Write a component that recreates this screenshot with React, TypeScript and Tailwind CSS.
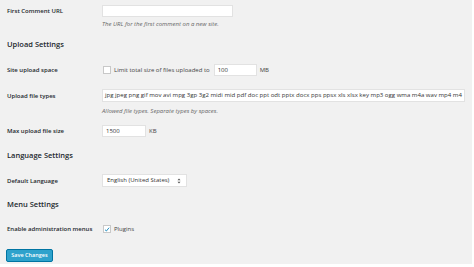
import React from "react";

const font = { fontFamily: '"Open Sans", "Noto Sans", Arial, sans-serif' };

function Label({ children }: { children: React.ReactNode }) {
  return (
    <div className="w-[95px] shrink-0 text-[6px] font-semibold text-[#23282d] leading-[8px]">
      {children}
    </div>
  );
}

function Heading({ children, mt }: { children: React.ReactNode; mt: string }) {
  return (
    <div className={`${mt} h-[12px] flex items-center text-[7.5px] font-semibold text-[#23282d]`}>{children}</div>
  );
}

export default function App() {
  return (
    <div className="w-[474px] h-[267px] bg-white overflow-hidden" style={font}>
      <div className="w-[472px] h-[264px] bg-[#f1f1f1] px-[7px] flex flex-col">
        <div className="mt-[5px] h-[12px] flex items-center">
          <Label>First Comment URL</Label>
          <div className="w-[131px] h-[12px] bg-white border border-[#e2e2e2]" />
        </div>
        <div className="mt-[3px] h-[8px] pl-[95px] flex items-center text-[6px] italic text-[#666]">
          The URL for the first comment on a new site.
        </div>

        <Heading mt="mt-[11px]">Upload Settings</Heading>

        <div className="mt-[13px] h-[12px] flex items-center">
          <Label>Site upload space</Label>
          <div className="ml-[1px] w-[8px] h-[8px] bg-white border border-[#c8c8c8]" />
          <span className="ml-[3px] text-[6px] text-[#444]">Limit total size of files uploaded to</span>
          <div className="ml-[4px] w-[43px] h-[12px] bg-white border border-[#e2e2e2] flex items-center pl-[3px] text-[6px] text-[#333]">
            100
          </div>
          <span className="ml-[3px] text-[6px] text-[#444]">MB</span>
        </div>

        <div className="mt-[13px] h-[13px] flex items-center">
          <Label>Upload file types</Label>
          <div className="w-[367px] h-[13px] bg-white border border-[#e2e2e2] flex items-center pl-[2px] text-[6.05px] text-[#333] overflow-hidden whitespace-nowrap">
            jpg jpeg png gif mov avi mpg 3gp 3g2 midi mid pdf doc ppt odt pptx docx pps ppsx xls xlsx key mp3 ogg wma m4a wav mp4 m4
          </div>
        </div>
        <div className="mt-[5px] h-[8px] pl-[95px] flex items-center text-[6px] italic text-[#666]">
          Allowed file types. Separate types by spaces.
        </div>

        <div className="mt-[10px] h-[12px] flex items-center">
          <Label>Max upload file size</Label>
          <div className="w-[44px] h-[12px] bg-white border border-[#e2e2e2] flex items-center pl-[3px] text-[6px] text-[#333]">
            1500
          </div>
          <span className="ml-[3px] text-[6px] text-[#444]">KB</span>
        </div>

        <Heading mt="mt-[13px]">Language Settings</Heading>

        <div className="mt-[12px] h-[13px] flex items-center">
          <Label>Default Language</Label>
          <div className="w-[85px] h-[13px] bg-white border border-[#e2e2e2] flex items-center justify-between pl-[4px] pr-[5px] text-[6px] text-[#333]">
            <span>English (United States)</span>
            <svg width="4" height="6" viewBox="0 0 4 6">
              <path d="M0.5 2.3 L2 0.6 L3.5 2.3 Z M0.5 3.7 L2 5.4 L3.5 3.7 Z" fill="#555" />
            </svg>
          </div>
        </div>

        <Heading mt="mt-[12px]">Menu Settings</Heading>

        <div className="mt-[12px] h-[12px] flex items-center">
          <Label>Enable administration menus</Label>
          <div className="ml-[1px] w-[8px] h-[8px] bg-white border border-[#c8c8c8] flex items-center justify-center">
            <svg width="7" height="7" viewBox="0 0 8 8">
              <path d="M1.3 4.2 L3.2 6 L6.8 1.6" fill="none" stroke="#1e8cbe" strokeWidth="1.3" />
            </svg>
          </div>
          <span className="ml-[3px] text-[6px] text-[#444]">Plugins</span>
        </div>

        <div className="mt-[14px] h-[13px] flex">
          <div className="-ml-[1px] w-[47px] h-[13px] bg-[#2ea2cc] border border-[#0074a2] rounded-[2px] flex items-center justify-center text-[5.5px] font-semibold text-white">
            Save Changes
          </div>
        </div>
      </div>
    </div>
  );
}
